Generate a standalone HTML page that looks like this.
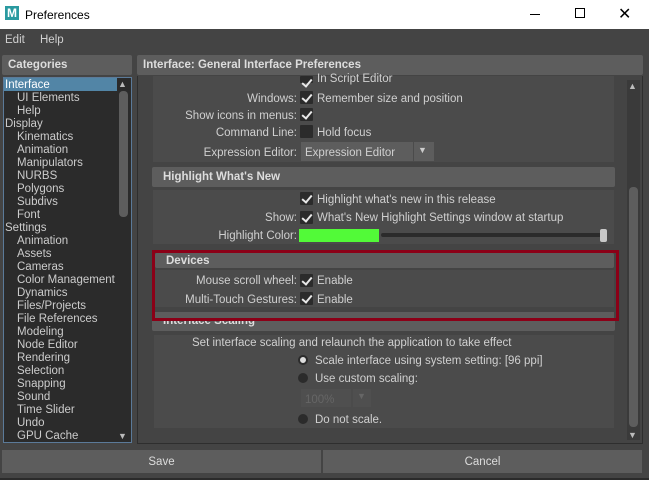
<!DOCTYPE html><html><head><style>
*{margin:0;padding:0;box-sizing:border-box}
body{width:649px;height:480px;background:#444;font-family:"Liberation Sans",sans-serif;font-size:11.5px;color:#d0d0d0;position:relative;overflow:hidden}
.a{position:absolute}
.t{position:absolute;white-space:nowrap;margin-top:1px}
.cb{position:absolute;width:13px;height:13px;background:#2b2b2b;border-radius:1px}
.cb.c::after{content:"";position:absolute;left:4px;top:1px;width:4px;height:8px;border:solid #e8e8e8;border-width:0 2px 2px 0;transform:rotate(40deg)}
.hdr{position:absolute;background:#5d5d5d;border-radius:2px;font-weight:bold;color:#ddd;padding-left:11px;line-height:18px}
.fr{position:absolute;background:#4b4b4b}
.r{text-align:right}
.list div{height:13px;line-height:13px}
.rad{position:absolute;width:10px;height:10px;border-radius:50%;background:#2b2b2b}
</style></head><body>
<div class="a" style="left:0;top:0;width:649px;height:29px;background:#fff;color:#000;font-size:12px">
 <div class="a" style="left:5px;top:6px;width:14px;height:14px;background:#2a9aa0;color:#fff;font-weight:bold;font-size:12px;line-height:14px;text-align:center">M</div>
 <div class="t" style="left:25px;top:7px">Preferences</div>
 <div class="a" style="left:530px;top:14px;width:10px;height:1px;background:#000"></div>
 <div class="a" style="left:575px;top:8px;width:10px;height:10px;border:1px solid #000"></div>
 <div class="t" style="left:618px;top:3px;font-size:16px">✕</div>
</div>
<div class="t" style="left:5px;top:33px">Edit</div>
<div class="t" style="left:40px;top:33px">Help</div>
<div class="hdr" style="left:2px;top:55px;width:130px;height:20px;padding-left:6px;line-height:21px">Categories</div>
<div class="hdr" style="left:137px;top:55px;width:506px;height:20px;padding-left:6px;line-height:21px">Interface: General Interface Preferences</div>
<div class="a" style="left:3px;top:77px;width:129px;height:366px;background:#2b2b2b;border:1px solid #5b7a99"></div>
<div class="a" style="left:4px;top:78px;width:113px;height:13px;background:#5285a6"></div>
<div class="a list" style="left:5px;top:79px;color:#ccc">
<div style="color:#fff">Interface</div><div style="padding-left:12px">UI Elements</div><div style="padding-left:12px">Help</div><div>Display</div><div style="padding-left:12px">Kinematics</div><div style="padding-left:12px">Animation</div><div style="padding-left:12px">Manipulators</div><div style="padding-left:12px">NURBS</div><div style="padding-left:12px">Polygons</div><div style="padding-left:12px">Subdivs</div><div style="padding-left:12px">Font</div><div>Settings</div><div style="padding-left:12px">Animation</div><div style="padding-left:12px">Assets</div><div style="padding-left:12px">Cameras</div><div style="padding-left:12px">Color Management</div><div style="padding-left:12px">Dynamics</div><div style="padding-left:12px">Files/Projects</div><div style="padding-left:12px">File References</div><div style="padding-left:12px">Modeling</div><div style="padding-left:12px">Node Editor</div><div style="padding-left:12px">Rendering</div><div style="padding-left:12px">Selection</div><div style="padding-left:12px">Snapping</div><div style="padding-left:12px">Sound</div><div style="padding-left:12px">Time Slider</div><div style="padding-left:12px">Undo</div><div style="padding-left:12px">GPU Cache</div>
</div>
<div class="a" style="left:119px;top:91px;width:9px;height:126px;background:#5d5d5d;border-radius:4px"></div>
<div class="t" style="left:118px;top:78px;font-size:9px;color:#bbb">▲</div>
<div class="t" style="left:118px;top:430px;font-size:9px;color:#bbb">▼</div>
<div class="a" style="left:137px;top:76px;width:506px;height:368px;background:#444;border:1px solid #2e2e2e;border-top:none"></div>
<div class="a" style="left:627px;top:80px;width:13px;height:360px;background:#3a3a3a"></div>
<div class="a" style="left:629px;top:187px;width:9px;height:240px;background:#5d5d5d;border-radius:4px"></div>
<div class="t" style="left:628px;top:80px;font-size:9px;color:#bbb">▲</div>
<div class="t" style="left:628px;top:429px;font-size:9px;color:#bbb">▼</div>
<div class="fr" style="left:153px;top:76px;width:461px;height:86px"></div>
<div class="cb c" style="left:300px;top:76px;height:7px"></div><div class="t" style="left:317px;top:72px;">In Script Editor</div>
<div class="t r" style="left:150px;width:147px;top:92px">Windows:</div><div class="cb c" style="left:300px;top:91px"></div><div class="t" style="left:317px;top:92px">Remember size and position</div>
<div class="t r" style="left:150px;width:147px;top:109px">Show icons in menus:</div><div class="cb c" style="left:300px;top:108px"></div>
<div class="t r" style="left:150px;width:147px;top:126px">Command Line:</div><div class="cb" style="left:300px;top:125px"></div><div class="t" style="left:317px;top:126px">Hold focus</div>
<div class="t r" style="left:150px;width:147px;top:146px">Expression Editor:</div>
<div class="a" style="left:301px;top:142px;width:112px;height:19px;background:#5d5d5d"></div><div class="t" style="left:305px;top:146px">Expression Editor</div>
<div class="a" style="left:414px;top:142px;width:20px;height:19px;background:#5d5d5d"></div><div class="t" style="left:418px;top:144px;font-size:9px;color:#ccc">▼</div>
<div class="hdr" style="left:152px;top:167px;width:463px;height:20px;line-height:21px">Highlight What's New</div>
<div class="fr" style="left:153px;top:190px;width:461px;height:54px"></div>
<div class="cb c" style="left:300px;top:192px"></div><div class="t" style="left:317px;top:193px">Highlight what's new in this release</div>
<div class="t r" style="left:150px;width:147px;top:211px">Show:</div><div class="cb c" style="left:300px;top:211px"></div><div class="t" style="left:317px;top:211px">What's New Highlight Settings window at startup</div>
<div class="t r" style="left:150px;width:147px;top:229px">Highlight Color:</div>
<div class="a" style="left:299px;top:229px;width:80px;height:13px;background:#52fa38"></div>
<div class="a" style="left:381px;top:233px;width:222px;height:4px;background:#2b2b2b;border-radius:2px"></div>
<div class="a" style="left:600px;top:229px;width:7px;height:13px;background:#c8c8c8;border-radius:2px"></div>
<div class="hdr" style="left:152px;top:311px;width:463px;height:20px;line-height:20px">Interface Scaling</div>
<div class="a" style="left:152px;top:250px;width:467px;height:71px;border:3px solid #8b0017;background:#444"></div>
<div class="hdr" style="left:155px;top:253px;width:459px;height:15px;line-height:16px">Devices</div>
<div class="fr" style="left:155px;top:270px;width:459px;height:37px"></div>
<div class="a" style="left:155px;top:312px;width:459px;height:6px;background:#5d5d5d"></div>
<div class="t r" style="left:150px;width:147px;top:274px">Mouse scroll wheel:</div><div class="cb c" style="left:300px;top:274px"></div><div class="t" style="left:317px;top:274px">Enable</div>
<div class="t r" style="left:150px;width:147px;top:293px">Multi-Touch Gestures:</div><div class="cb c" style="left:300px;top:292px"></div><div class="t" style="left:317px;top:293px">Enable</div>
<div class="fr" style="left:154px;top:335px;width:460px;height:93px"></div>
<div class="t" style="left:192px;top:336px">Set interface scaling and relaunch the application to take effect</div>
<div class="rad" style="left:298px;top:355px;background:#ddd;border:2px solid #2b2b2b"></div><div class="t" style="left:315px;top:354px">Scale interface using system setting: [96 ppi]</div>
<div class="rad" style="left:298px;top:373px"></div><div class="t" style="left:315px;top:372px">Use custom scaling:</div>
<div class="a" style="left:301px;top:389px;width:50px;height:18px;background:#4f4f4f"></div><div class="t" style="left:305px;top:393px;color:#666">100%</div>
<div class="a" style="left:353px;top:389px;width:18px;height:18px;background:#4f4f4f"></div><div class="t" style="left:357px;top:390px;font-size:9px;color:#666">▼</div>
<div class="rad" style="left:298px;top:414px"></div><div class="t" style="left:315px;top:413px">Do not scale.</div>
<div class="a" style="left:2px;top:450px;width:319px;height:23px;background:#5d5d5d;text-align:center;line-height:25px;color:#ddd">Save</div>
<div class="a" style="left:323px;top:450px;width:319px;height:23px;background:#5d5d5d;text-align:center;line-height:25px;color:#ddd">Cancel</div>
<div class="a" style="left:0;top:478px;width:649px;height:2px;background:#2b2b2b"></div>
</body></html>
